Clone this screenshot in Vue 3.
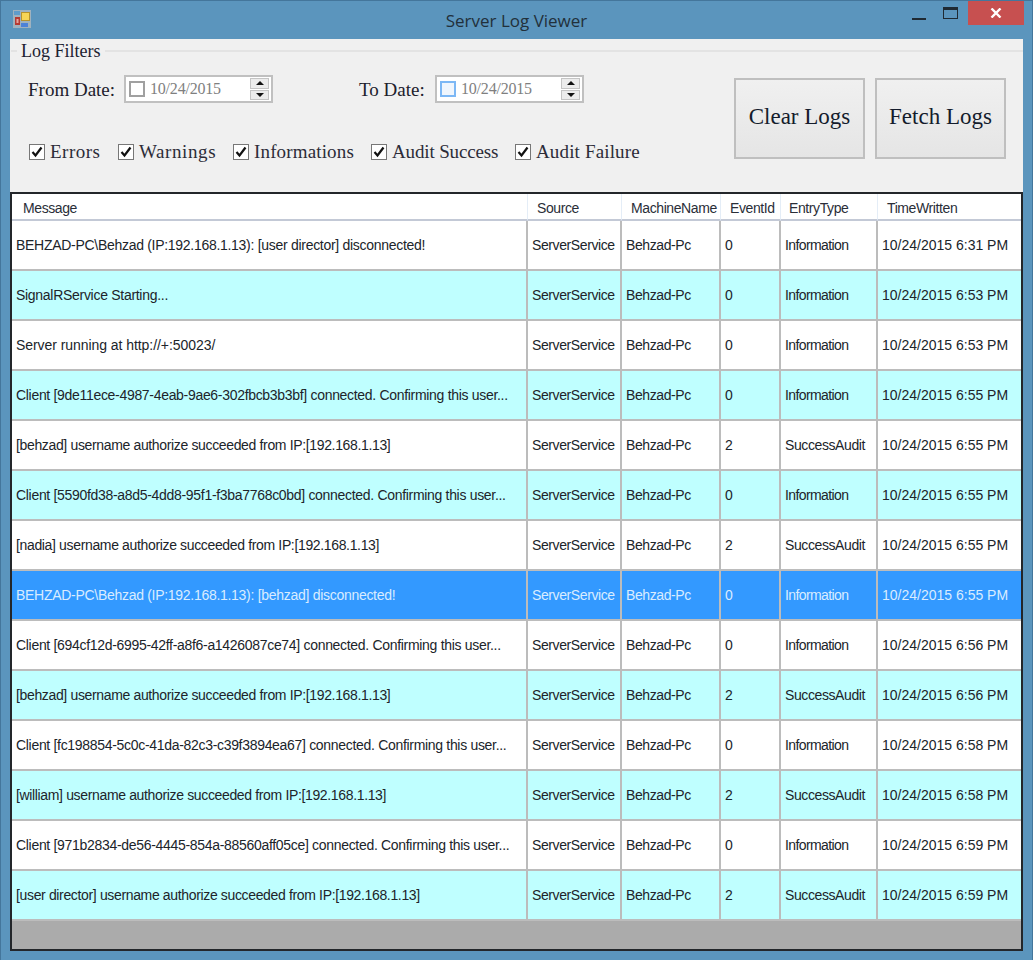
<script setup>
const filters = [
  { label: 'Errors', width: 89, spacing: 0.5 },
  { label: 'Warnings', width: 115, spacing: 0.6 },
  { label: 'Informations', width: 138, spacing: 0.15 },
  { label: 'Audit Success', width: 144, spacing: -0.15 },
  { label: 'Audit Failure', width: 130, spacing: 0.15 }
]
const columns = [
  { label: 'Message', width: 516, cls: 'h-first' },
  { label: 'Source', width: 94, cls: '' },
  { label: 'MachineName', width: 99, cls: '' },
  { label: 'EventId', width: 60, cls: '' },
  { label: 'EntryType', width: 97, cls: 'h-entry' },
  { label: 'TimeWritten', width: 143, cls: '' }
]
const rows = [
  ['BEHZAD-PC\\Behzad (IP:192.168.1.13): [user director] disconnected!', '0', 'Information', '6:31'],
  ['SignalRService Starting...', '0', 'Information', '6:53'],
  ['Server running at http://+:50023/', '0', 'Information', '6:53'],
  ['Client [9de11ece-4987-4eab-9ae6-302fbcb3b3bf] connected. Confirming this user...', '0', 'Information', '6:55'],
  ['[behzad] username authorize succeeded from IP:[192.168.1.13]', '2', 'SuccessAudit', '6:55'],
  ['Client [5590fd38-a8d5-4dd8-95f1-f3ba7768c0bd] connected. Confirming this user...', '0', 'Information', '6:55'],
  ['[nadia] username authorize succeeded from IP:[192.168.1.13]', '2', 'SuccessAudit', '6:55'],
  ['BEHZAD-PC\\Behzad (IP:192.168.1.13): [behzad] disconnected!', '0', 'Information', '6:55'],
  ['Client [694cf12d-6995-42ff-a8f6-a1426087ce74] connected. Confirming this user...', '0', 'Information', '6:56'],
  ['[behzad] username authorize succeeded from IP:[192.168.1.13]', '2', 'SuccessAudit', '6:56'],
  ['Client [fc198854-5c0c-41da-82c3-c39f3894ea67] connected. Confirming this user...', '0', 'Information', '6:58'],
  ['[william] username authorize succeeded from IP:[192.168.1.13]', '2', 'SuccessAudit', '6:58'],
  ['Client [971b2834-de56-4445-854a-88560aff05ce] connected. Confirming this user...', '0', 'Information', '6:59'],
  ['[user director] username authorize succeeded from IP:[192.168.1.13]', '2', 'SuccessAudit', '6:59']
]
function rowClass(i) {
  if (i === 7) return 'selected'
  return i % 2 === 1 ? 'alt' : ''
}
function messageClass(text) {
  if (text.startsWith('Server running')) return 'm-loose'
  if (text.includes('username')) return 'm-tight'
  if (text.startsWith('Client')) return 'm-client'
  return 'm-base'
}
</script>

<template>
  <div class="window">
    <header class="titlebar">
      <svg class="app-icon" width="18" height="18" viewBox="0 0 18 18">
        <rect width="18" height="18" fill="#9fb2bf" />
        <rect x="1" y="1" width="6" height="4" fill="#5f9ccb" />
        <rect x="8" y="2" width="9" height="9" fill="#b8932a" />
        <rect x="9" y="3" width="7" height="7" fill="#f7d555" />
        <rect x="2" y="7" width="5" height="8" fill="#b53a32" />
        <rect x="3.500" y="9" width="2" height="4" fill="#e9a49c" />
        <rect x="8" y="13" width="7" height="4" fill="#4c82d8" />
      </svg>
      <div class="title">Server Log Viewer</div>
      <div class="controls">
        <span class="min"></span>
        <span class="max"></span>
        <span class="close">
          <svg width="12" height="10" viewBox="0 0 12 10">
            <path d="M1.500 0.500 L10.500 9.500 M10.500 0.500 L1.500 9.500" stroke="#fff" stroke-width="2.400" fill="none" />
          </svg>
        </span>
      </div>
    </header>

    <main class="client">
      <section class="filters">
        <fieldset class="group">
          <legend>Log Filters</legend>
          <div class="filter-body">
            <div class="filter-left">
              <div class="date-row">
                <label class="date-label from">From Date:</label>
                <div class="date-box">
                  <span class="date-check"></span>
                  <span class="date-text">10/24/2015</span>
                  <span class="spinner">
                    <span class="spin"><i class="up"></i></span>
                    <span class="spin"><i class="down"></i></span>
                  </span>
                </div>
                <label class="date-label to">To Date:</label>
                <div class="date-box">
                  <span class="date-check focus"></span>
                  <span class="date-text">10/24/2015</span>
                  <span class="spinner">
                    <span class="spin"><i class="up"></i></span>
                    <span class="spin"><i class="down"></i></span>
                  </span>
                </div>
              </div>
              <div class="check-row">
                <label v-for="f in filters" :key="f.label" class="check" :style="{ width: f.width + 'px' }">
                  <span class="box">
                    <svg width="12" height="12" viewBox="0 0 12 12">
                      <path d="M1.500 6 L4.500 9.500 L10.500 1.500" stroke="#111" stroke-width="2.200" fill="none" />
                    </svg>
                  </span>
                  <span :style="{ letterSpacing: f.spacing + 'px' }">{{ f.label }}</span>
                </label>
              </div>
            </div>
            <div class="buttons">
              <button class="btn" type="button">Clear Logs</button>
              <button class="btn" type="button">Fetch Logs</button>
            </div>
          </div>
        </fieldset>
      </section>

      <section class="grid-wrap">
        <table class="grid">
          <colgroup>
            <col v-for="c in columns" :key="c.label" :style="{ width: c.width + 'px' }" />
          </colgroup>
          <thead>
            <tr>
              <th v-for="c in columns" :key="c.label" :class="c.cls">{{ c.label }}</th>
            </tr>
          </thead>
          <tbody>
            <tr v-for="(r, i) in rows" :key="i" :class="rowClass(i)">
              <td :class="messageClass(r[0])">{{ r[0] }}</td>
              <td class="c-source">ServerService</td>
              <td class="c-source">Behzad-Pc</td>
              <td>{{ r[1] }}</td>
              <td :class="r[2] === 'Information' ? 'c-info' : 'c-source'">{{ r[2] }}</td>
              <td>10/24/2015 {{ r[3] }} PM</td>
            </tr>
          </tbody>
        </table>
      </section>
    </main>
  </div>
</template>

<style scoped>
.window {
  width: 1033px;
  height: 960px;
  box-sizing: border-box;
  background: #5b95bd;
  border-top: 1px solid #44769b;
  border-left: 1px solid #44769b;
  border-right: 1px solid #44769b;
  padding: 0 9px 9px;
  display: flex;
  flex-direction: column;
  overflow: hidden;
}
.titlebar {
  height: 38px;
  flex: none;
  position: relative;
  display: flex;
  justify-content: center;
  align-items: flex-start;
}
.app-icon {
  position: absolute;
  left: 3px;
  top: 9px;
}
.title {
  font-family: "Open Sans", sans-serif;
  font-size: 17px;
  color: #22303a;
  line-height: 40px;
}
.controls {
  position: absolute;
  right: -9px;
  top: 0;
  display: flex;
  align-items: flex-start;
}
.min {
  width: 14px;
  height: 2px;
  background: #1f2a33;
  margin: 17px 17px 0 0;
}
.max {
  width: 13px;
  height: 8px;
  border: 1px solid #1f2a33;
  border-top-width: 3px;
  margin: 6px 10px 0 0;
}
.close {
  width: 56px;
  height: 24px;
  margin: 0 8px 0 0;
  background: #c75050;
  display: flex;
  align-items: center;
  justify-content: center;
}
.client {
  flex: 1;
  min-height: 0;
  display: flex;
  flex-direction: column;
  background: #f0f0f0;
}
.filters {
  flex: none;
  height: 153px;
  box-sizing: border-box;
  padding-left: 1px;
}
.group {
  margin: 1px 0 0;
  padding: 0;
  border: none;
  border-top: 2px solid #e3e3e3;
  box-sizing: border-box;
  min-width: 0;
}
legend {
  font-family: "Liberation Serif", serif;
  font-size: 18px;
  color: #1c2230;
  padding: 1px 4px 0;
  margin-left: 6px;
  line-height: 20px;
}
.filter-body {
  display: flex;
  justify-content: space-between;
  font-family: "Liberation Serif", serif;
  color: #222;
}
.filter-left {
  padding: 14px 0 0 17px;
}
.date-row {
  display: flex;
  align-items: center;
  height: 28px;
}
.date-label {
  font-size: 19px;
  color: #20202c;
  padding-top: 2px;
}
.date-label.from {
  width: 96px;
}
.date-label.to {
  margin-left: 86px;
  width: 76px;
}
.date-box {
  width: 149px;
  height: 28px;
  box-sizing: border-box;
  background: #fff;
  border: 2px solid #c0c0c0;
  display: flex;
  align-items: center;
  padding-left: 3px;
}
.date-check {
  width: 16px;
  height: 16px;
  box-sizing: border-box;
  border: 2px solid #a0a0a0;
  background: #fff;
  flex: none;
}
.date-check.focus {
  border-color: #7db8f5;
  background: #f0f6fd;
}
.date-text {
  font-size: 16px;
  letter-spacing: -0.2px;
  color: #7f7f7f;
  margin-left: 5px;
  flex: 1;
}
.spinner {
  width: 19px;
  height: 22px;
  display: flex;
  flex-direction: column;
  gap: 1px;
  margin-right: 2px;
  background: #fff;
}
.spin {
  flex: 1;
  background: #ececec;
  border: 1px solid #c4c4c4;
  display: flex;
  align-items: center;
  justify-content: center;
}
.up {
  width: 0;
  height: 0;
  border-left: 4px solid transparent;
  border-right: 4px solid transparent;
  border-bottom: 4px solid #111;
}
.down {
  width: 0;
  height: 0;
  border-left: 4px solid transparent;
  border-right: 4px solid transparent;
  border-top: 4px solid #111;
}
.check-row {
  display: flex;
  margin-top: 38px;
  margin-left: 1px;
}
.check {
  display: flex;
  align-items: center;
  gap: 5px;
  font-size: 19px;
  color: #2c2c38;
  height: 22px;
}
.box {
  width: 16px;
  height: 16px;
  box-sizing: border-box;
  border: 1px solid #777;
  background: #fff;
  flex: none;
  display: flex;
  align-items: center;
  justify-content: center;
}
.buttons {
  display: flex;
  gap: 10px;
  padding: 17px 17px 0 0;
}
.btn {
  width: 131px;
  height: 81px;
  box-sizing: border-box;
  border: 2px solid #bfbfbf;
  background: linear-gradient(#f0f0f0, #e5e5e5);
  font-family: "Liberation Serif", serif;
  font-size: 23px;
  color: #141c2c;
  padding: 0 0 4px;
}
.grid-wrap {
  flex: 1;
  min-height: 0;
  box-sizing: border-box;
  border: 2px solid #23262a;
  background: #ababab;
  overflow: hidden;
}
.grid {
  table-layout: fixed;
  border-collapse: separate;
  border-spacing: 0;
  width: 1009px;
  font-family: "Liberation Sans", sans-serif;
  color: #20242a;
}
th {
  height: 27px;
  box-sizing: border-box;
  background: #fff;
  border-bottom: 2px solid #c3c9d6;
  border-right: 1px solid #e4edf7;
  font-weight: 400;
  font-size: 14px;
  letter-spacing: -0.4px;
  text-align: left;
  color: #2a2e38;
  padding: 2px 0 0 9px;
  white-space: nowrap;
  overflow: hidden;
}
th.h-first { padding-left: 11px; }
th.h-entry { padding-left: 8px; }
th:last-child, td:last-child { border-right: none; }
td {
  height: 50px;
  box-sizing: border-box;
  background: #fff;
  border-bottom: 2px solid #bcbcbc;
  border-right: 2px solid #bcbcbc;
  font-size: 14px;
  padding: 0 0 0 4px;
  white-space: nowrap;
  overflow: hidden;
}
td.m-base { letter-spacing: -0.29px; }
td.m-loose { letter-spacing: -0.06px; }
td.m-tight { letter-spacing: -0.35px; }
td.m-client { letter-spacing: -0.31px; }
td.c-source { letter-spacing: -0.4px; }
td.c-info { letter-spacing: -0.6px; }
tr.alt td {
  background: #bfffff;
}
tr.selected td {
  background: #3399ff;
  color: #d9ecff;
}
</style>

<style>
html, body {
  margin: 0;
  background: #5b95bd;
}
</style>
